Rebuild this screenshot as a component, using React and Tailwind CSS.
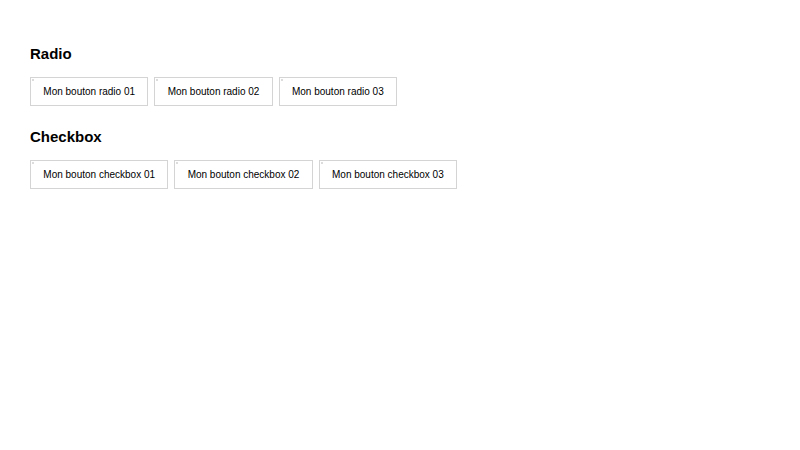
import React from 'react';

const radios = ['Mon bouton radio 01', 'Mon bouton radio 02', 'Mon bouton radio 03'];
const checks = ['Mon bouton checkbox 01', 'Mon bouton checkbox 02', 'Mon bouton checkbox 03'];

function Group({ title, items }) {
  return (
    <section className="mb-[21px]">
      <h2 className="text-[15px] font-bold text-black mb-[13px] leading-[20px]">{title}</h2>
      <div className="flex gap-[6px]">
        {items.map((label) => (
          <label
            key={label}
            className="relative border border-[#d4d4d4] px-[12.3px] h-[29px] flex items-center text-[10px] text-black bg-white"
          >
            <span className="absolute left-[1px] top-[1px] w-[2px] h-[2px] bg-[#dcdcdc]" />
            {label}
          </label>
        ))}
      </div>
    </section>
  );
}

export default function App() {
  return (
    <div className="min-h-[450px] bg-white px-[30px] pt-[44px] font-['Liberation_Sans',Arial,sans-serif]">
      <Group title="Radio" items={radios} />
      <Group title="Checkbox" items={checks} />
    </div>
  );
}
